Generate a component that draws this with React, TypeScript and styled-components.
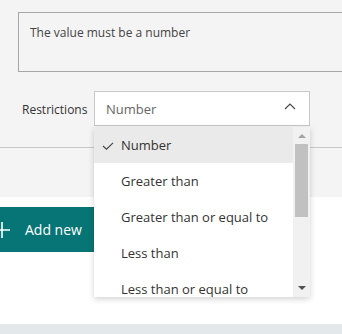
import React from "react";
import styled, { createGlobalStyle } from "styled-components";

const GlobalStyle = createGlobalStyle`
  html, body {
    margin: 0;
    padding: 0;
    background: #ffffff;
    font-family: "Open Sans", "Noto Sans", Arial, sans-serif;
  }
`;

const options = [
  "Number",
  "Greater than",
  "Greater than or equal to",
  "Less than",
  "Less than or equal to",
];

const App: React.FC = () => {
  return (
    <Page>
      <GlobalStyle />
      <Settings>
        <MessageBox>The value must be a number</MessageBox>
        <Row>
          <Label>Restrictions</Label>
          <DropdownWrap>
            <Dropdown>
              <DropdownValue>Number</DropdownValue>
              <svg width="12" height="7" viewBox="0 0 12 7">
                <path d="M1 6 L6 1 L11 6" fill="none" stroke="#444" strokeWidth="1.1" />
              </svg>
            </Dropdown>
            <Menu>
              <OptionList>
                {options.map((o, i) => (
                  <Option key={o} selected={i === 0}>
                    {i === 0 && (
                      <Check width="12" height="8" viewBox="0 0 12 8">
                        <path d="M1 4 L4.5 7.2 L11 0.8" fill="none" stroke="#444" strokeWidth="1.1" />
                      </Check>
                    )}
                    {o}
                  </Option>
                ))}
              </OptionList>
              <Scrollbar>
                <Arrow>
                  <svg width="8" height="5" viewBox="0 0 8 5">
                    <path d="M0 5 L4 1 L8 5 Z" fill="#a3a3a3" />
                  </svg>
                </Arrow>
                <Track>
                  <Thumb />
                </Track>
                <Arrow>
                  <svg width="8" height="5" viewBox="0 0 8 5">
                    <path d="M0 0 L4 4 L8 0 Z" fill="#505050" />
                  </svg>
                </Arrow>
              </Scrollbar>
            </Menu>
          </DropdownWrap>
        </Row>
        <Divider />
      </Settings>
      <Actions>
        <AddButton>
          <PlusIcon width="16" height="16" viewBox="0 0 16 16">
            <path d="M8 0 V16 M0 8 H16" stroke="#ffffff" strokeWidth="1.6" />
          </PlusIcon>
          Add new
        </AddButton>
      </Actions>
      <Footer />
    </Page>
  );
};

export default App;

const Page = styled.div`
  width: 342px;
  height: 334px;
  overflow: hidden;
  display: flex;
  flex-direction: column;
  background: #ffffff;
`;

const Settings = styled.div`
  background: #f4f4f4;
  height: 197px;
  padding-top: 12px;
  box-sizing: border-box;
  display: flex;
  flex-direction: column;
`;

const MessageBox = styled.div`
  margin-left: 18px;
  width: 360px;
  height: 60px;
  box-sizing: border-box;
  border: 1px solid #a6a6a6;
  padding: 11px 11px;
  font-size: 12px;
  line-height: 18px;
  color: #444444;
`;

const Row = styled.div`
  display: flex;
  align-items: center;
  margin-top: 19px;
  padding-left: 22px;
`;

const Label = styled.div`
  width: 72px;
  font-size: 12px;
  color: #333333;
  padding-top: 2px;
`;

const DropdownWrap = styled.div`
  position: relative;
  width: 216px;
`;

const Dropdown = styled.div`
  height: 35px;
  box-sizing: border-box;
  background: #ffffff;
  border: 1px solid #c8c8c8;
  display: flex;
  align-items: center;
  justify-content: space-between;
  padding: 1px 13px 0 11px;
  svg {
    margin-top: -6px;
  }
`;

const DropdownValue = styled.span`
  font-size: 13px;
  color: #666666;
`;

const Menu = styled.div`
  position: absolute;
  top: 36px;
  left: 0;
  width: 216px;
  height: 170px;
  background: #ffffff;
  box-shadow: 0 2px 6px rgba(0, 0, 0, 0.18);
  display: flex;
  z-index: 2;
  overflow: hidden;
`;

const OptionList = styled.div`
  flex: 1;
  display: flex;
  flex-direction: column;
`;

const Option = styled.div<{ selected: boolean }>`
  position: relative;
  flex: 0 0 36px;
  display: flex;
  align-items: center;
  padding-left: 27px;
  font-size: 13px;
  color: #333333;
  background: ${(p) => (p.selected ? "#eaeaea" : "#ffffff")};
`;

const Check = styled.svg`
  position: absolute;
  left: 8px;
  top: 15px;
`;

const Scrollbar = styled.div`
  width: 17px;
  background: #f1f1f1;
  display: flex;
  flex-direction: column;
`;

const Arrow = styled.div`
  height: 17px;
  display: flex;
  align-items: center;
  justify-content: center;
`;

const Track = styled.div`
  flex: 1;
  padding: 0 2px;
`;

const Thumb = styled.div`
  height: 73px;
  background: #c1c1c1;
`;

const Divider = styled.div`
  margin-top: 21px;
  height: 1px;
  background: #c8c8c8;
`;

const Actions = styled.div`
  flex: 1;
  padding-top: 10px;
`;

const AddButton = styled.div`
  margin-left: -12px;
  width: 120px;
  height: 45px;
  background: #077575;
  color: #ffffff;
  display: flex;
  align-items: center;
  font-size: 14px;
  padding-left: 6px;
  box-sizing: border-box;
`;

const PlusIcon = styled.svg`
  margin-right: 15px;
`;

const Footer = styled.div`
  height: 10px;
  background: #e3e9eb;
`;
